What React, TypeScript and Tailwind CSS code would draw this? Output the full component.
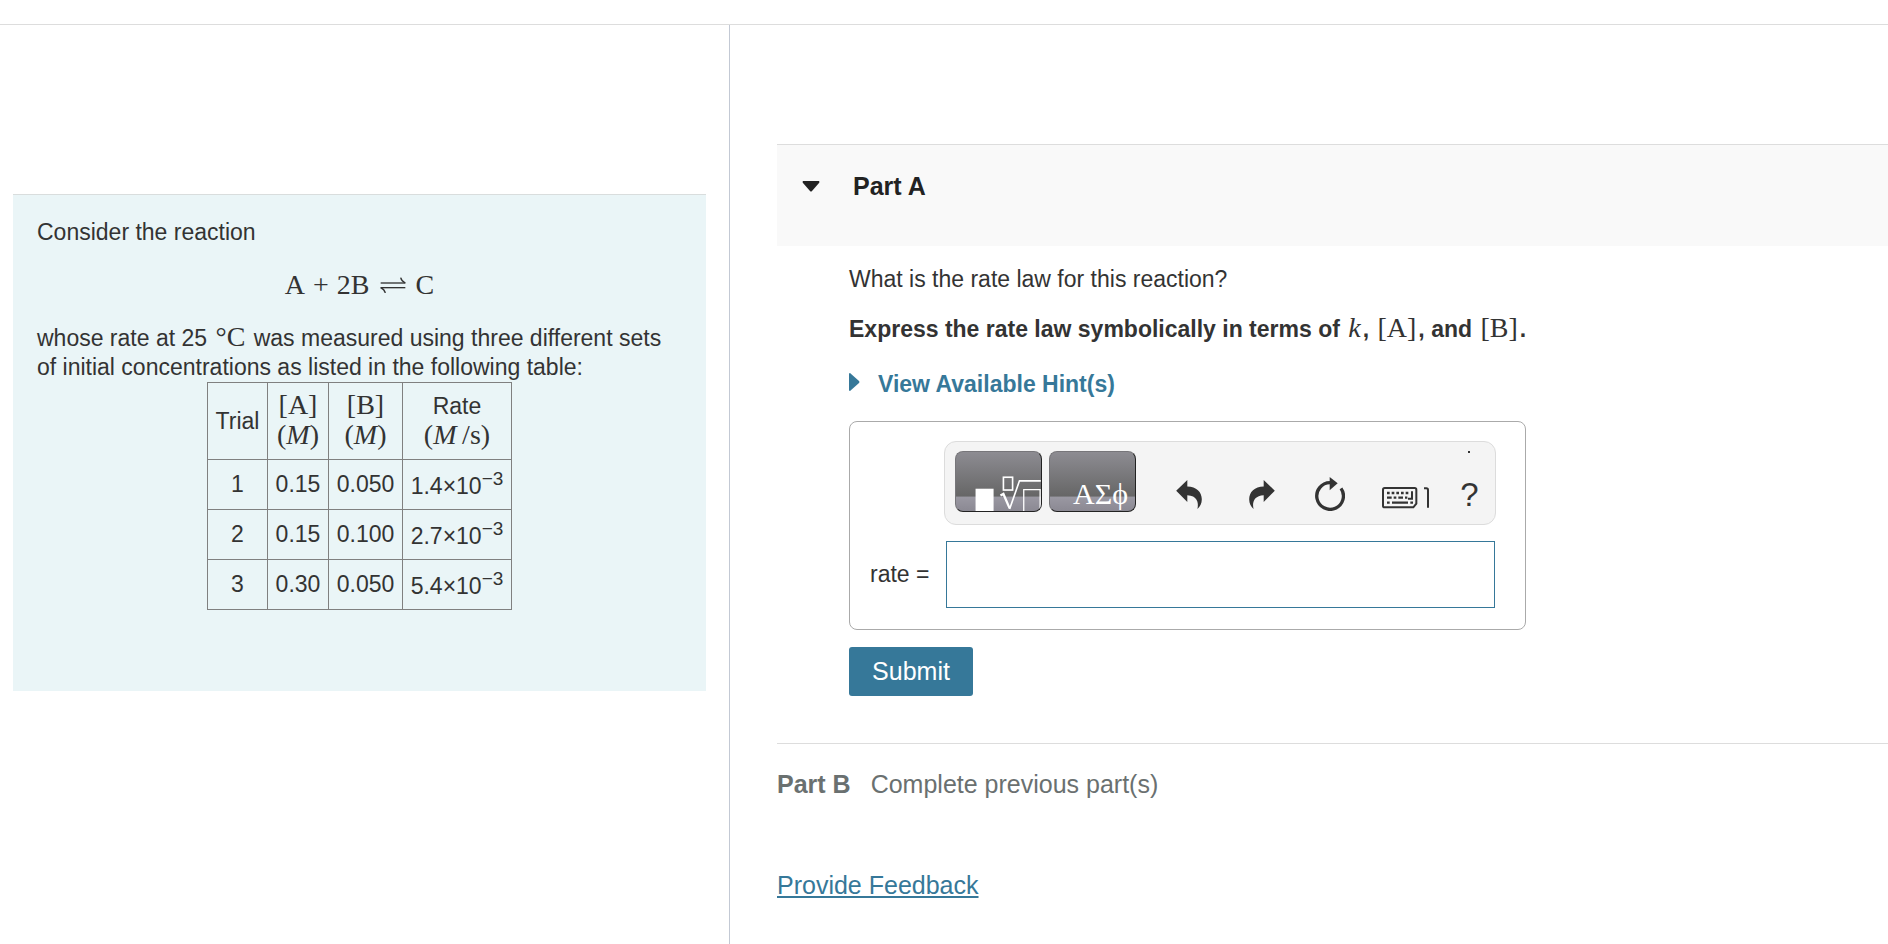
import type { ReactNode } from "react";

const trials = [
  { trial: "1", a: "0.15", b: "0.050", rate: "1.4×10" },
  { trial: "2", a: "0.15", b: "0.100", rate: "2.7×10" },
  { trial: "3", a: "0.30", b: "0.050", rate: "5.4×10" },
];

function Tex({ children }: { children: ReactNode }) {
  return (
    <span className="mx-0.5 font-['Liberation_Serif',serif] text-[28px] leading-none font-normal">
      {children}
    </span>
  );
}

function EquilibriumArrow() {
  return (
    <svg role="img" aria-label="in equilibrium with" className="h-4 w-[26px]" viewBox="0 0 78 48" fill="none" stroke="currentColor" strokeWidth="4">
      <path d="M2 18H76" />
      <path d="M62 2C64 10 69 15 76 18" />
      <path d="M2 32H76" />
      <path d="M2 32C9 35 14 40 16 48" />
    </svg>
  );
}

function UndoIcon() {
  return (
    <svg className="h-[29px] w-[26px]" viewBox="0 0 76 86" fill="currentColor" aria-hidden="true">
      <path d="M0 32 33 0V19C60 20 76 35 76 57C76 69 71 79 63 86C68 66 61 46 33 45V65Z" />
    </svg>
  );
}

function RedoIcon() {
  return (
    <svg className="h-[29px] w-[26px]" viewBox="0 0 76 86" fill="currentColor" aria-hidden="true">
      <path d="M76 32 43 0V19C16 20 0 35 0 57C0 69 5 79 13 86C8 66 15 46 43 45V65Z" />
    </svg>
  );
}

function ResetIcon() {
  return (
    <svg className="h-[34px] w-[30px]" viewBox="0 0 90 102" aria-hidden="true">
      <path d="M45 17A40 40 0 1 0 78 34" fill="none" stroke="currentColor" strokeWidth="10" />
      <path d="M44 0 68 19 44 40Z" fill="currentColor" />
    </svg>
  );
}

function KeyboardIcon() {
  return (
    <svg className="h-[22px] w-[47px]" viewBox="0 0 141 66" aria-hidden="true">
      <path d="M8 3H98Q103 3 103 8V50L94 61H8Q3 61 3 56V8Q3 3 8 3Z" fill="none" stroke="currentColor" strokeWidth="6" />
      <path d="M15 18H80" stroke="currentColor" strokeWidth="7" strokeDasharray="8 6" />
      <path d="M15 32H76" stroke="currentColor" strokeWidth="7" strokeDasharray="14 6 8 6" />
      <path d="M90 13V35H78" fill="none" stroke="currentColor" strokeWidth="6" />
      <path d="M15 47H23M30 47H78M85 47H93" stroke="currentColor" strokeWidth="7" />
      <path d="M126 4H133Q138 4 138 9V62" fill="none" stroke="currentColor" strokeWidth="6" />
    </svg>
  );
}

function TemplatesIcon() {
  return (
    <svg className="h-full w-full" viewBox="0 0 258 180" fill="none" stroke="#fff" aria-hidden="true">
      <rect x="59" y="112" width="55" height="68" fill="#fff" stroke="none" />
      <rect x="144" y="77" width="28" height="39" strokeWidth="5" />
      <path d="M135 133 144 128 163 172" strokeWidth="7" />
      <path d="M163 174 193 88H258" strokeWidth="5" />
      <path d="M206 180V115H256V180" strokeWidth="4" />
    </svg>
  );
}

function PaletteButton({ label, children }: { label: string; children: ReactNode }) {
  return (
    <button
      type="button"
      aria-label={label}
      className="h-[61px] w-[87px] overflow-hidden rounded-lg border border-t-[#77767a] border-r-[#222] border-b-[#222] border-l-[#77767a] bg-[linear-gradient(#8d8c92_0%,#666_75%,#9a98a2_76%,#8b8993_100%)]"
    >
      {children}
    </button>
  );
}

export default function App() {
  return (
    <div className="flex min-h-screen flex-col bg-white pt-6 font-['Liberation_Sans',Arial,sans-serif] text-[23px] leading-[29px] text-[#333]">
      <main className="flex grow border-t border-[#ddd]">
        <section className="w-[730px] shrink-0 border-r border-[#c3c9d4] pt-[169px] pr-[23px] pl-[13px]">
          <div className="min-h-[497px] border-t border-[#d9dddd] bg-[#eaf5f7] px-6 pt-[23px]">
            <p>Consider the reaction</p>
            <p className="mt-6 flex items-center justify-center gap-2">
              <span className="flex gap-1">
                <Tex>A</Tex>
                <Tex>+</Tex>
                <Tex>2B</Tex>
              </span>
              <EquilibriumArrow />
              <Tex>C</Tex>
            </p>
            <p className="mt-6">
              whose rate at 25 <Tex>°C</Tex> was measured using three different sets of initial concentrations as listed in the following table:
            </p>
            <table className="mx-auto border-collapse text-center [&_td]:h-[50px] [&_td]:border [&_td]:border-[#808080] [&_th]:h-[77px] [&_th]:border [&_th]:border-[#808080] [&_th]:font-normal">
              <thead>
                <tr>
                  <th scope="col" className="w-[60px]">Trial</th>
                  <th scope="col" className="w-[61px]">
                    <Tex>[A]</Tex>
                    <br />
                    <Tex>(<i>M</i>)</Tex>
                  </th>
                  <th scope="col" className="w-[74px]">
                    <Tex>[B]</Tex>
                    <br />
                    <Tex>(<i>M</i>)</Tex>
                  </th>
                  <th scope="col" className="w-[109px]">
                    Rate
                    <br />
                    <Tex>(<i>M</i>&thinsp;/s)</Tex>
                  </th>
                </tr>
              </thead>
              <tbody>
                {trials.map((row) => (
                  <tr key={row.trial}>
                    <td>{row.trial}</td>
                    <td>{row.a}</td>
                    <td>{row.b}</td>
                    <td className="pt-1">
                      {row.rate}
                      <sup className="text-[19px]">−3</sup>
                    </td>
                  </tr>
                ))}
              </tbody>
            </table>
          </div>
        </section>

        <section className="min-w-0 grow pt-[119px] pl-[47px]">
          <h2 className="h-[102px] border-t border-[#ddd] bg-[#f9f9f9] pt-[27px] text-[25px] font-bold text-[#222]">
            <button type="button" aria-expanded="true" className="flex items-center gap-[33px] pl-[25px]">
              <svg className="h-[11px] w-[18px]" viewBox="0 0 18 11" fill="currentColor" aria-hidden="true">
                <path d="M1 0H17Q18 1 17 2L10 10Q9 11 8 10L1 2Q0 1 1 0Z" />
              </svg>
              Part A
            </button>
          </h2>

          <div className="pl-[72px]">
            <p className="mt-[19px]">What is the rate law for this reaction?</p>
            <p className="mt-5 font-bold">
              Express the rate law symbolically in terms of <Tex><i>k</i></Tex>, <Tex>[A]</Tex>, and <Tex>[B]</Tex>.
            </p>
            <button type="button" aria-expanded="false" className="mt-[26px] flex items-start gap-[18px] font-bold text-[#367899]">
              <svg className="mt-[3px] h-[18px] w-[11px]" viewBox="0 0 11 18" fill="currentColor" aria-hidden="true">
                <path d="M0 1Q0 0 1 0L10 8Q11 9 10 10L1 18Q0 18 0 17Z" />
              </svg>
              View Available Hint(s)
            </button>

            <div className="mt-[22px] max-w-[677px] rounded-lg border border-[#aaa] pt-[19px] pr-[29px] pb-[21px] pl-5">
              <div className="ml-[74px] flex h-[84px] rounded-xl border border-[#dcdcdc] bg-[#f4f4f4] pt-[9px] pl-[10px] text-[#333]">
                <div className="flex gap-[7px]">
                  <PaletteButton label="Templates">
                    <TemplatesIcon />
                  </PaletteButton>
                  <PaletteButton label="Greek symbols">
                    <span className="block pt-6 pl-4 font-['Liberation_Serif','DejaVu_Serif',serif] text-[30px] leading-9 text-white">ΑΣϕ</span>
                  </PaletteButton>
                </div>
                <div className="relative flex h-[70px] grow items-center pt-4 pl-4 [&_button]:flex [&_button]:justify-center">
                  <button type="button" aria-label="Undo" className="w-[73px]"><UndoIcon /></button>
                  <button type="button" aria-label="Redo" className="w-[73px]"><RedoIcon /></button>
                  <button type="button" aria-label="Reset" className="w-[63px]"><ResetIcon /></button>
                  <button type="button" aria-label="Keyboard shortcuts" className="w-[89px] pt-2"><KeyboardIcon /></button>
                  <button type="button" aria-label="Help" className="w-[39px] text-[33px]">?</button>
                  <span className="absolute top-0 right-[25px] size-[2px] bg-[#333]" />
                </div>
              </div>
              <div className="mt-4 flex items-center justify-between">
                <label htmlFor="rate">rate =</label>
                <input id="rate" type="text" className="mr-px h-[67px] w-[549px] border border-[#367899] bg-white px-3 outline-none" />
              </div>
            </div>

            <button type="button" className="mt-[17px] h-[49px] w-[124px] rounded-[3px] bg-[#367899] text-[25px] text-white">
              Submit
            </button>
          </div>

          <div className="mt-[47px] flex gap-5 border-t border-[#ddd] pt-[26px] text-[25px] text-[#6a7070]">
            <h2 className="font-bold">Part B</h2>
            <p>Complete previous part(s)</p>
          </div>

          <a href="#feedback" className="mt-[72px] inline-block text-[25px] text-[#367899] underline decoration-2 underline-offset-2">
            Provide Feedback
          </a>
        </section>
      </main>
    </div>
  );
}
